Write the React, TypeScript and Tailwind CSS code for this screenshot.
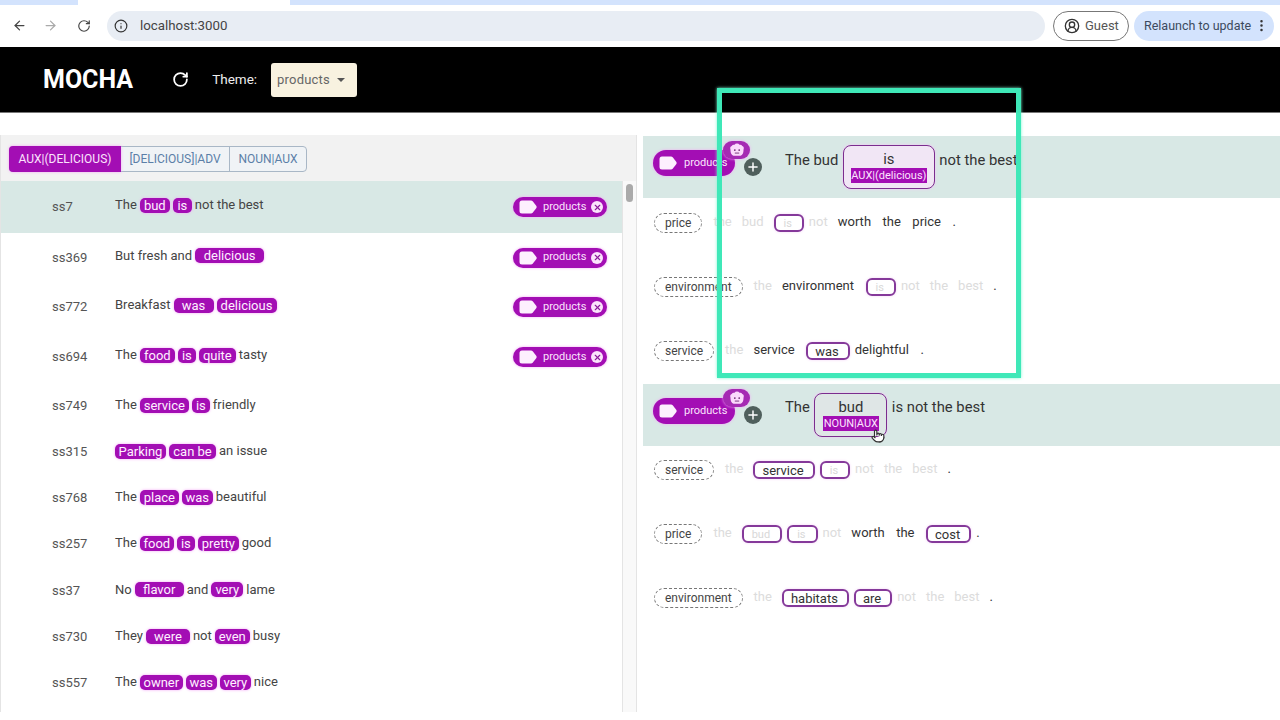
import React from 'react';
import { ArrowLeft, ArrowRight, CircleUserRound, EllipsisVertical, Info, Plus, Pointer, RotateCw, X } from 'lucide-react';

const PURPLE = 'bg-[#a30eb4]';

type Token = { t: string; w?: string };

interface Row {
  id: string;
  h: string;
  chip?: boolean;
  active?: boolean;
  tokens: Token[];
}

const rows: Row[] = [
  { id: 'ss7', h: 'h-[52px]', chip: true, active: true, tokens: [{ t: 'The' }, { t: 'bud', w: 'w-[30px]' }, { t: 'is', w: 'w-[19px]' }, { t: 'not the best' }] },
  { id: 'ss369', h: 'h-[49px]', chip: true, tokens: [{ t: 'But fresh and' }, { t: 'delicious', w: 'w-[69px]' }] },
  { id: 'ss772', h: 'h-[50px]', chip: true, tokens: [{ t: 'Breakfast' }, { t: 'was', w: 'w-[40px]' }, { t: 'delicious', w: 'w-[60px]' }] },
  { id: 'ss694', h: 'h-[50px]', chip: true, tokens: [{ t: 'The' }, { t: 'food', w: 'w-[35px]' }, { t: 'is', w: 'w-[18px]' }, { t: 'quite', w: 'w-[37px]' }, { t: 'tasty' }] },
  { id: 'ss749', h: 'h-[46px]', tokens: [{ t: 'The' }, { t: 'service', w: 'w-[49px]' }, { t: 'is', w: 'w-[18px]' }, { t: 'friendly' }] },
  { id: 'ss315', h: 'h-[46px]', tokens: [{ t: 'Parking', w: 'w-[51px]' }, { t: 'can be', w: 'w-[47px]' }, { t: 'an issue' }] },
  { id: 'ss768', h: 'h-[46px]', tokens: [{ t: 'The' }, { t: 'place', w: 'w-[39px]' }, { t: 'was', w: 'w-[31px]' }, { t: 'beautiful' }] },
  { id: 'ss257', h: 'h-[46px]', tokens: [{ t: 'The' }, { t: 'food', w: 'w-[34px]' }, { t: 'is', w: 'w-[18px]' }, { t: 'pretty', w: 'w-[41px]' }, { t: 'good' }] },
  { id: 'ss37', h: 'h-[47px]', tokens: [{ t: 'No' }, { t: 'flavor', w: 'w-[49px]' }, { t: 'and' }, { t: 'very', w: 'w-[32px]' }, { t: 'lame' }] },
  { id: 'ss730', h: 'h-[46px]', tokens: [{ t: 'They' }, { t: 'were', w: 'w-[44px]' }, { t: 'not' }, { t: 'even', w: 'w-[35px]' }, { t: 'busy' }] },
  { id: 'ss557', h: 'h-[46px]', tokens: [{ t: 'The' }, { t: 'owner', w: 'w-[43px]' }, { t: 'was', w: 'w-[31px]' }, { t: 'very', w: 'w-[31px]' }, { t: 'nice' }] },
];

// f = faded, b = boxed, fb = faded and boxed
type Word = [string, '' | 'f' | 'b' | 'fb'];

const Tag = ({ className }: { className: string }) => (
  <svg viewBox="0 0 18 14" className={className}>
    <path d="M3 0.5 H12 Q13 0.5 13.7 1.3 L17.4 6 Q18 7 17.4 8 L13.7 12.7 Q13 13.5 12 13.5 H3 Q0.5 13.5 0.5 11 V3 Q0.5 0.5 3 0.5 Z" fill="#fdf0fe" />
  </svg>
);

const Robot = () => (
  <svg viewBox="0 0 18 16" className="w-[16px] h-[14px]">
    <path d="M9 0.5 Q11 0.5 11.8 2 Q14 1.5 15 3.5 Q17.5 4.5 16.5 7.5 Q16.5 13.5 13 14.5 H5 Q1.5 13.5 1.5 7.5 Q0.5 4.5 3 3.5 Q4 1.5 6.2 2 Q7 0.5 9 0.5 Z" fill="#fbd9fc" />
    <circle cx="6.5" cy="8" r="1" fill="#6b2a70" />
    <circle cx="11.5" cy="8" r="1" fill="#6b2a70" />
    <rect x="6.5" y="11" width="5" height="1" fill="#6b2a70" />
  </svg>
);

const ListChip = () => (
  <div className={`flex items-center w-[94px] h-[20px] rounded-full ${PURPLE} pl-[6px] shadow-[0_0_3px_#f2a6f7]`}>
    <Tag className="w-[18px] h-[14px] shrink-0" />
    <span className="ml-[6px] text-[11px] text-[#fbe3fc]">products</span>
    <span className="ml-[5px] flex items-center justify-center w-[12px] h-[12px] rounded-full bg-[#fbe3fc]">
      <X size={9} strokeWidth={3} className="text-[#8c1a9a]" />
    </span>
  </div>
);

const ListRow = ({ row }: { row: Row }) => (
  <div className={`flex items-center ${row.h} ${row.active ? 'bg-[#d8e8e5]' : ''}`}>
    <span className={`w-[114px] pl-[51px] text-[13px] text-[#555] shrink-0 ${row.chip ? '' : 'mt-[2px]'}`}>{row.id}</span>
    <div className={`flex items-center gap-[3px] text-[13px] text-[#444] ${row.chip ? '-mt-[4px]' : ''}`}>
      {row.tokens.map((tk, i) =>
        tk.w ? (
          <span key={i} className={`${tk.w} h-[15px] leading-[15px] text-center rounded-[5px] ${PURPLE} text-[#fff0ff] shadow-[0_0_3px_#f2a6f7]`}>
            {tk.t}
          </span>
        ) : (
          <span key={i}>{tk.t}</span>
        ),
      )}
    </div>
    {row.chip && (
      <div className="ml-auto mr-[15px]">
        <ListChip />
      </div>
    )}
  </div>
);

const SourceHead = ({ before, word, label, after, boxW, labelW, boxBg, textMt }: { before: string; word: string; label: string; after: string; boxW: string; labelW: string; boxBg: string; textMt: string }) => (
  <div className="relative flex items-center h-[62px] bg-[#d8e8e5] pl-[10px]">
    <div className="relative w-[132px] shrink-0 -mt-[8px]">
      <div className={`flex items-center w-[82px] h-[26px] rounded-full ${PURPLE} pl-[6px] shadow-[0_0_3px_#f2a6f7]`}>
        <Tag className="w-[18px] h-[14px] shrink-0" />
        <span className="ml-[7px] text-[11px] text-[#fbe3fc]">products</span>
      </div>
      <div className="absolute left-[70px] -top-[9px] flex items-center justify-center w-[27px] h-[18px] rounded-full bg-[#a52ab3] shadow-[0_0_3px_#f2a6f7]">
        <Robot />
      </div>
      <div className="absolute left-[91px] top-[8px] flex items-center justify-center w-[18px] h-[18px] rounded-full bg-[#4f5f5c]">
        <Plus size={14} strokeWidth={2.5} className="text-white" />
      </div>
    </div>
    <div className="flex items-center gap-[4.5px] text-[14.8px] text-[#333]">
      <span className={textMt}>{before}</span>
      <div className={`flex flex-col items-center ${boxW} h-[44px] pt-[4px] rounded-[8px] border-[1.5px] border-[#7b2d8e] ${boxBg} shadow-[0_0_3px_#f2c4f5]`}>
        <span className="leading-[18px]">{word}</span>
        <span className={`${labelW} h-[15px] leading-[15px] text-center text-[11px] ${PURPLE} text-[#fde4fe]`}>{label}</span>
      </div>
      <span className={textMt}>{after}</span>
    </div>
  </div>
);

const EditRow = ({ tag, words }: { tag: string; words: Word[] }) => (
  <div className="flex items-center h-[48px] pl-[11px] text-[13px]">
    <span className="h-[20px] leading-[18px] px-[10px] mr-[11px] rounded-full border border-dashed border-[#777] text-[12px] text-[#444]">{tag}</span>
    {words.map(([w, kind], i) => {
      const faded = kind === 'f' || kind === 'fb';
      if (kind === 'b' || kind === 'fb') {
        return (
          <span
            key={i}
            className={`h-[18px] leading-[15px] mr-[5px] rounded-[6px] border-[2px] border-[#85399a] shadow-[0_0_3px_#f4d4f7] ${faded ? 'pl-[8px] pr-[10px] text-[#d8d8d8] text-[11px]' : 'pl-[7px] pr-[9px] text-[#333]'}`}
          >
            {w}
          </span>
        );
      }
      return (
        <span key={i} className={`-mt-[2px] ${faded ? 'mr-[10px] text-[#dcdcdc]' : 'mr-[11.5px] text-[#333]'}`}>
          {w}
        </span>
      );
    })}
  </div>
);

export default function App() {
  return (
    <div className="relative w-[1280px] h-[720px] overflow-hidden bg-white font-['Roboto',sans-serif]">
      {/* browser chrome */}
      <div className="flex h-[5px]">
        <div className="w-[78px] bg-[#d3e3fd]" />
        <div className="w-[212px] bg-white" />
        <div className="flex-1 bg-[#d3e3fd]" />
      </div>
      <div className="flex items-center h-[42px] pb-[1px] bg-white">
        <ArrowLeft size={15} className="ml-[12px] text-[#444]" />
        <ArrowRight size={15} className="ml-[16px] text-[#aaa]" />
        <RotateCw size={14} className="ml-[19px] text-[#444]" />
        <div className="flex items-center flex-1 h-[30px] ml-[16px] rounded-full bg-[#e8edf4]">
          <Info size={14} className="ml-[7px] text-[#333]" />
          <span className="ml-[12px] text-[13.3px] text-[#444]">localhost:3000</span>
        </div>
        <div className="flex items-center w-[76px] h-[30px] ml-[8px] rounded-full border border-[#777] text-[13px] text-[#555]">
          <CircleUserRound size={16} className="ml-[10px] text-[#333]" />
          <span className="ml-[5px]">Guest</span>
        </div>
        <div className="flex items-center w-[140px] h-[30px] ml-[5px] mr-[6px] rounded-full bg-[#d3e3fd] text-[12.5px] text-[#3c4a5e]">
          <span className="ml-[10px] mt-[1px] whitespace-nowrap">Relaunch to update</span>
          <EllipsisVertical size={15} className="ml-[3px] text-[#333]" />
        </div>
      </div>

      {/* app header */}
      <div className="flex items-center h-[66px] bg-black border-b border-[#777]">
        <span className="ml-[43px] text-[25px] font-bold text-white">MOCHA</span>
        <RotateCw size={17} strokeWidth={2.5} className="ml-[39px] text-white" />
        <span className="ml-[23px] text-[13.5px] text-[#eee]">Theme:</span>
        <div className="flex items-center w-[86px] h-[34px] ml-[14px] pl-[6px] rounded-[3px] bg-[#f8f2e0] text-[13px] tracking-[0.2px] text-[#666]">
          products
          <span className="ml-[7px] w-0 h-0 border-x-[4px] border-x-transparent border-t-[4px] border-t-[#555]" />
        </div>
      </div>

      <div className="flex mt-[22px]">
        {/* sentence list */}
        <div className="w-[637px] h-[577px] shrink-0 border-l border-r border-[#e4e4e4]">
          <div className="flex items-start h-[46px] pt-[11px] pl-[8px] bg-[#f2f2f2]">
            <div className="flex h-[26px] text-[12px] rounded-[4px] border border-[#a9b7c6] text-[#5b7fa8] bg-[#f0f3f6]">
              <span className={`flex items-center justify-center w-[112px] -m-[1px] mr-0 rounded-l-[4px] ${PURPLE} text-[#fbe3fc] shadow-[0_0_3px_#f2a6f7]`}>AUX|(DELICIOUS)</span>
              <span className="flex items-center justify-center w-[109px] border-r border-[#a9b7c6]">[DELICIOUS]|ADV</span>
              <span className="flex items-center justify-center w-[76px]">NOUN|AUX</span>
            </div>
          </div>
          <div className="flex h-[531px]">
            <div className="w-[622px] shrink-0 border-r border-[#e4e4e4]">
              {rows.map((row) => (
                <ListRow key={row.id} row={row} />
              ))}
            </div>
            <div className="flex-1 pl-[3px] pt-[3px] bg-[#f9f9f9]">
              <div className="w-[7px] h-[18px] rounded-full bg-[#aaa]" />
            </div>
          </div>
        </div>

        {/* edits */}
        <div className="flex-1 ml-[6px] pt-[1px]">
          <SourceHead before="The bud" word="is" label="AUX|(delicious)" after="not the best" boxW="w-[92px]" labelW="w-[76px]" boxBg="bg-[#f1e6f5]" textMt="-mt-[14px]" />
          <div className="flex flex-col gap-[16px] mt-[1px]">
            <EditRow tag="price" words={[['the', 'f'], ['bud', 'f'], ['is', 'fb'], ['not', 'f'], ['worth', ''], ['the', ''], ['price', ''], ['.', '']]} />
            <EditRow tag="environment" words={[['the', 'f'], ['environment', ''], ['is', 'fb'], ['not', 'f'], ['the', 'f'], ['best', 'f'], ['.', '']]} />
            <EditRow tag="service" words={[['the', 'f'], ['service', ''], ['was', 'b'], ['delightful', ''], ['.', '']]} />
          </div>
          <div className="mt-[9px]">
            <SourceHead before="The" word="bud" label="NOUN|AUX" after="is not the best" boxW="w-[73px]" labelW="w-[56px]" boxBg="bg-[#dfe6e6]" textMt="-mt-[16px]" />
          </div>
          <div className="flex flex-col gap-[16px]">
            <EditRow tag="service" words={[['the', 'f'], ['service', 'b'], ['is', 'fb'], ['not', 'f'], ['the', 'f'], ['best', 'f'], ['.', '']]} />
            <EditRow tag="price" words={[['the', 'f'], ['bud', 'fb'], ['is', 'fb'], ['not', 'f'], ['worth', ''], ['the', ''], ['cost', 'b'], ['.', '']]} />
            <EditRow tag="environment" words={[['the', 'f'], ['habitats', 'b'], ['are', 'b'], ['not', 'f'], ['the', 'f'], ['best', 'f'], ['.', '']]} />
          </div>
        </div>
      </div>

      {/* video annotation and pointer on top of the page */}
      <div className="absolute left-[717px] top-[88px] w-[304px] h-[290px] border-[5px] border-[#3fe8b8] shadow-[0_0_3px_#7ff5d2] pointer-events-none" />
      <Pointer size={14} className="absolute left-[871px] top-[429px] text-[#333] fill-white" />
    </div>
  );
}
